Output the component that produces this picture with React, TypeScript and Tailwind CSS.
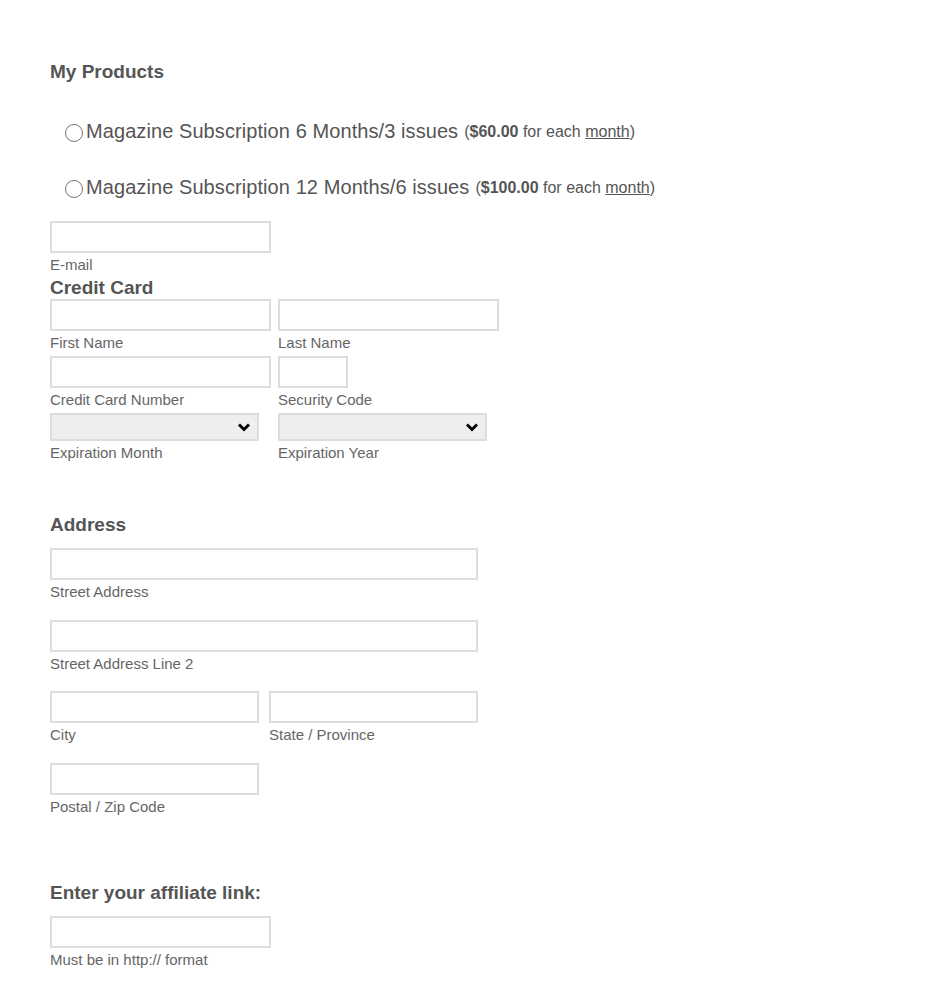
import React from "react";

const Field: React.FC<{ label: string; w: string }> = ({ label, w }) => (
    <div className="flex flex-col">
        <input type="text" className={`${w} h-[32px] border-2 border-[#dddddd] bg-white outline-none`}/>
        <label className="text-[15px] leading-[24px] text-[#666666]">{label}</label>
    </div>
);

const SelectField: React.FC<{ label: string }> = ({ label }) => (
    <div className="flex flex-col">
        <div className="relative w-[209px] h-[28px] border-2 border-[#dddddd] bg-[#eeeeee]">
            <svg className="absolute right-[6px] top-[7px]" width="14" height="10" viewBox="0 0 14 10">
                <path d="M2 2.5 L7 7.5 L12 2.5" fill="none" stroke="#000" strokeWidth="2.8"/>
            </svg>
        </div>
        <label className="text-[15px] leading-[24px] text-[#666666]">{label}</label>
    </div>
);

const Product: React.FC<{ name: string; price: string }> = ({ name, price }) => (
    <label className="flex items-center h-[56px] pl-[15px]">
        <span className="w-[18px] h-[18px] rounded-full border border-[#767676] bg-white mr-[3px] mt-[3px]"/>
        <span className="text-[20px] tracking-[0.08px] text-[#555555]">{name}</span>
        <span className="text-[16px] text-[#555555] ml-[6px] mt-[2px]">
            (<b>{price}</b> for each <u>month</u>)
        </span>
    </label>
);

export default function App() {
    return (
        <div className="min-h-[1008px] bg-white px-[50px] pt-[61px] font-[family-name:'Liberation_Sans',Arial,sans-serif] text-[#555555]">
            <h2 className="text-[19px] leading-[22px] font-bold">My Products</h2>
            <div className="mt-[20px]">
                <Product name="Magazine Subscription 6 Months/3 issues" price="$60.00"/>
                <Product name="Magazine Subscription 12 Months/6 issues" price="$100.00"/>
            </div>
            <div className="mt-[6px]">
                <Field label="E-mail" w="w-[221px]"/>
            </div>
            <h2 className="text-[19px] leading-[22px] font-bold">Credit Card</h2>
            <div className="flex gap-[7px]">
                <Field label="First Name" w="w-[221px]"/>
                <Field label="Last Name" w="w-[221px]"/>
            </div>
            <div className="flex gap-[7px] mt-[1px]">
                <Field label="Credit Card Number" w="w-[221px]"/>
                <Field label="Security Code" w="w-[70px]"/>
            </div>
            <div className="flex gap-[19px] mt-[1px]">
                <SelectField label="Expiration Month"/>
                <SelectField label="Expiration Year"/>
            </div>

            <h2 className="text-[19px] leading-[22px] font-bold mt-[49px]">Address</h2>
            <div className="mt-[12px] flex flex-col">
                <Field label="Street Address" w="w-[428px]"/>
                <div className="mt-[16px]">
                    <Field label="Street Address Line 2" w="w-[428px]"/>
                </div>
                <div className="mt-[15px] flex gap-[10px]">
                    <Field label="City" w="w-[209px]"/>
                    <Field label="State / Province" w="w-[209px]"/>
                </div>
                <div className="mt-[16px]">
                    <Field label="Postal / Zip Code" w="w-[209px]"/>
                </div>
            </div>

            <h2 className="text-[19px] leading-[22px] font-bold mt-[63px]">Enter your affiliate link:</h2>
            <div className="mt-[12px]">
                <Field label="Must be in http:// format" w="w-[221px]"/>
            </div>
        </div>
    );
}
